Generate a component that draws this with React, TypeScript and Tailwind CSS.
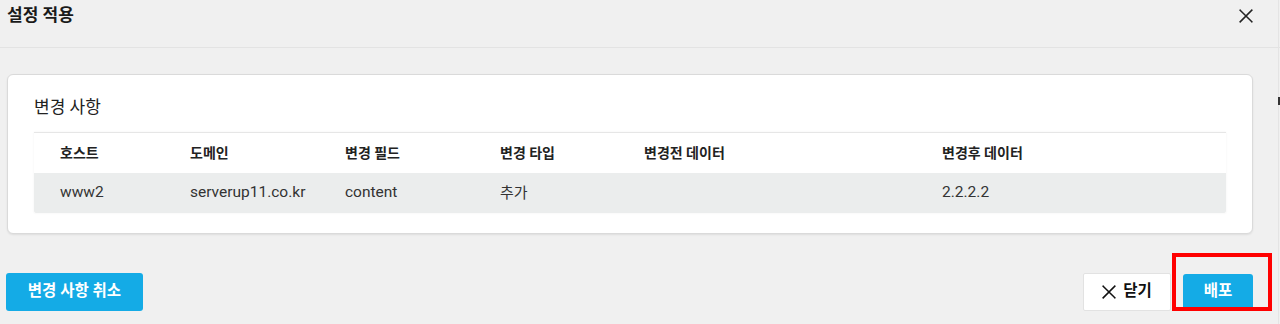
const columns = [
  { key: 'host', label: '호스트' },
  { key: 'domain', label: '도메인' },
  { key: 'field', label: '변경 필드' },
  { key: 'type', label: '변경 타입' },
  { key: 'before', label: '변경전 데이터' },
  { key: 'after', label: '변경후 데이터' },
];

const rows = [
  { host: 'www2', domain: 'serverup11.co.kr', field: 'content', type: '추가', before: '', after: '2.2.2.2' },
];

function CrossIcon({ size, stroke }: { size: number; stroke: number }) {
  return (
    <svg width={size} height={size} viewBox="0 0 12 12" fill="none" stroke="currentColor" strokeWidth={stroke} strokeLinecap="square">
      <path d="M1 1 11 11M11 1 1 11" />
    </svg>
  );
}

export default function App() {
  return (
    <div className="relative w-[1280px] h-[324px] overflow-hidden bg-[#f0f0f0] text-[#222] font-['Roboto','Noto_Sans_CJK_KR',sans-serif]">
      {/* Header */}
      <div className="flex items-start justify-between h-[48px] border-b border-[#e3e3e3] pl-[7px] pr-[27px] pt-[3px]">
        <h2 className="text-[17px] font-bold leading-6 text-[#1a1a1a]">설정 적용</h2>
        <button className="mt-[6px] text-[#222]">
          <CrossIcon size={14} stroke={1.3} />
        </button>
      </div>

      {/* Changes card */}
      <div className="ml-[7px] mt-[26px] w-[1246px] rounded-[6px] border border-[#dadada] bg-white pl-[26px] pr-[26px] pt-[20px] pb-[20px] shadow-[0_1px_2px_rgba(0,0,0,0.08)]">
        <h3 className="text-[17px] leading-6 text-[#222]">변경 사항</h3>
        <div className="mt-[13px] border-t border-[#e6e6e6] shadow-[0_0_2px_rgba(0,0,0,0.06)]">
          <div className="grid grid-cols-[130px_155px_155px_144px_298px_1fr] h-[40px] items-center bg-white text-sm font-semibold text-[#222]">
            {columns.map((c) => (
              <div key={c.key} className="pl-[26px]">
                {c.label}
              </div>
            ))}
          </div>
          {rows.map((r, i) => (
            <div
              key={i}
              className="grid grid-cols-[130px_155px_155px_144px_298px_1fr] h-[40px] items-center bg-[#ebeded] text-[15.5px] text-[#333] rounded-b-[2px]"
            >
              <div className="pl-[26px]">{r.host}</div>
              <div className="pl-[26px]">{r.domain}</div>
              <div className="pl-[26px]">{r.field}</div>
              <div className="pl-[26px] text-[15px]">{r.type}</div>
              <div className="pl-[26px]">{r.before}</div>
              <div className="pl-[26px]">{r.after}</div>
            </div>
          ))}
        </div>
      </div>

      {/* Footer */}
      <div className="flex items-center justify-between mt-[39px] pl-[6px] pr-[27px]">
        <button className="h-[38px] w-[137px] rounded-[3px] bg-[#14abe6] text-[15.5px] font-bold text-white">
          변경 사항 취소
        </button>
        <div className="flex items-center gap-[12px]">
          <button className="flex h-[38px] w-[88px] items-center justify-center gap-[7px] rounded-[2px] border border-[#e2e2e2] bg-white text-[15.5px] font-semibold text-[#111]">
            <CrossIcon size={14} stroke={1.3} />
            닫기
          </button>
          <button className="h-[37px] w-[70px] rounded-[3px] bg-[#14abe6] text-[15.5px] font-bold text-white">
            배포
          </button>
        </div>
      </div>

      {/* Highlight annotation */}
      <div className="absolute left-[1172px] top-[253px] h-[58px] w-[100px] border-4 border-[#ff0000]" />

      {/* scrollbar edge */}
      <div className="absolute right-[1px] top-0 h-full w-px bg-[#e4e4e4]" />
      <div className="absolute right-0 top-[97px] h-[8px] w-[2px] bg-[#333]" />
    </div>
  );
}
